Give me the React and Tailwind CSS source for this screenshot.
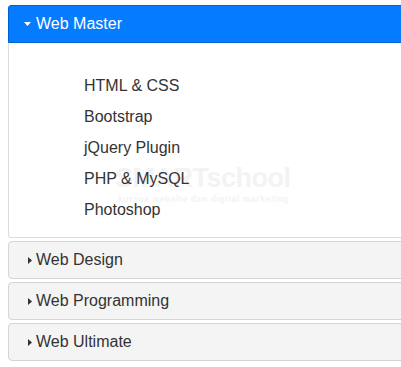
import { useState } from "react";

const courses = ["HTML & CSS", "Bootstrap", "jQuery Plugin", "PHP & MySQL", "Photoshop"];
const panels = ["Web Master", "Web Design", "Web Programming", "Web Ultimate"];

const Caret = ({ open }) =>
  open ? (
    <svg width="7" height="4" viewBox="0 0 7 4" className="shrink-0">
      <path d="M0 0h7L3.5 4z" fill="currentColor" />
    </svg>
  ) : (
    <svg width="4" height="7" viewBox="0 0 4 7" className="shrink-0">
      <path d="M0 0v7l4-3.5z" fill="currentColor" />
    </svg>
  );

export default function App() {
  const [open, setOpen] = useState(0);

  return (
    <div className="pl-2 pt-[5px] font-['Liberation_Sans',Arial,sans-serif] bg-white min-h-[367px] overflow-hidden">
      <div className="w-[410px] flex flex-col gap-[3px]">
        {panels.map((title, i) => {
          const active = open === i;
          return (
            <div key={title} className="flex flex-col">
              {active ? (
                <button
                  onClick={() => setOpen(-1)}
                  className="h-[38px] flex items-center gap-[5px] pl-[15px] bg-[#057bff] border border-[#0062cc] text-white text-[16px] rounded-t-[3px] text-left"
                >
                  <Caret open />
                  <span>{title}</span>
                </button>
              ) : (
                <button
                  onClick={() => setOpen(i)}
                  className="h-[38px] flex items-center gap-[4px] pl-[19px] bg-[#f4f4f4] border border-[#d4d4d4] text-[#333] text-[16px] rounded-[4px] text-left"
                >
                  <Caret />
                  <span>{title}</span>
                </button>
              )}
              {active && (
                <div className="relative border border-t-0 border-[#dcdcdc] rounded-b-[3px] pt-[27px] pb-[12px] pl-[75px]">
                  {/* watermark sits behind the list */}
                  <div className="absolute left-[106px] top-[120px] pointer-events-none select-none">
                    <div className="text-[27px] leading-[30px] text-[#f3f3f3] font-semibold tracking-[-0.5px]">
                      SMARTschool
                    </div>
                    <div className="text-[8.5px] font-bold text-[#f3f3f3] tracking-[0.6px] pl-[3px]">
                      kursus website dan digital marketing
                    </div>
                  </div>
                  <ul className="relative flex flex-col">
                    {courses.map((c) => (
                      <li key={c} className="text-[16px] leading-[31px] text-[#333]">
                        {c}
                      </li>
                    ))}
                  </ul>
                </div>
              )}
            </div>
          );
        })}
      </div>
    </div>
  );
}
